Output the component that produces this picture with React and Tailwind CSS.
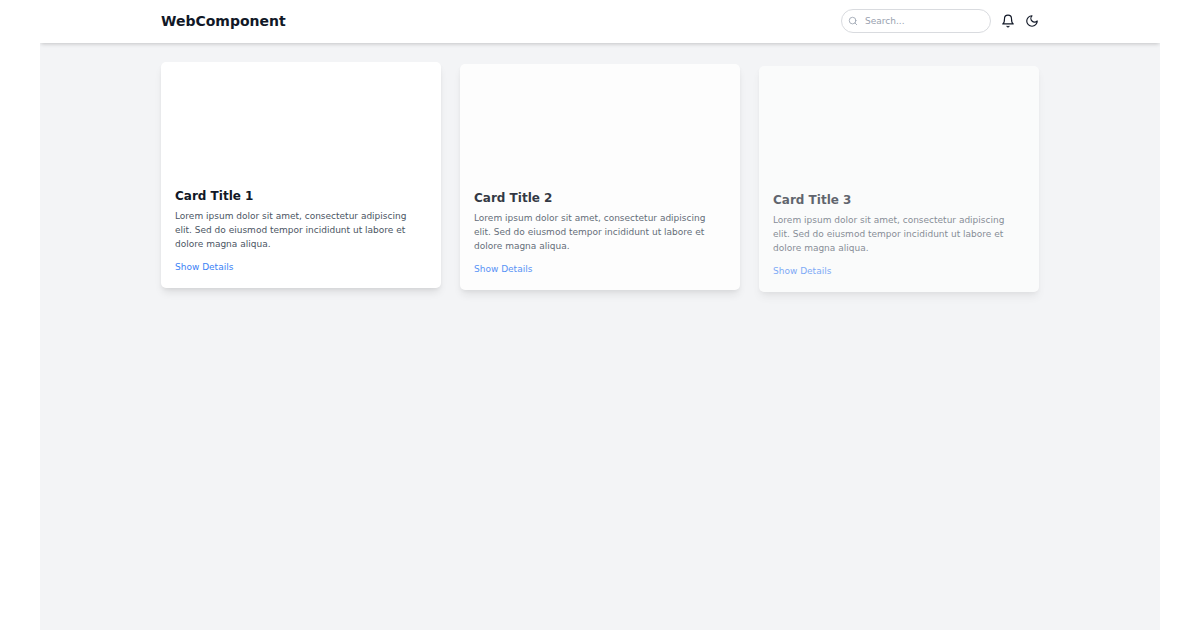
import React from 'react';

const cards = [
  { id: 1, title: 'Card Title 1', state: 'opacity-100' },
  { id: 2, title: 'Card Title 2', state: 'mt-[2px] opacity-85' },
  { id: 3, title: 'Card Title 3', state: 'mt-1 opacity-65' },
];

const SearchIcon = () => (
  <svg className="w-[10px] h-[10px] text-gray-400" fill="none" viewBox="0 0 24 24" stroke="currentColor" strokeWidth={2} strokeLinecap="round" strokeLinejoin="round">
    <circle cx="11" cy="11" r="8" />
    <path d="m21 21-4.3-4.3" />
  </svg>
);

const BellIcon = () => (
  <svg className="w-[14px] h-[14px]" fill="none" viewBox="0 0 24 24" stroke="currentColor" strokeWidth={2} strokeLinecap="round" strokeLinejoin="round">
    <path d="M6 8a6 6 0 0 1 12 0c0 7 3 9 3 9H3s3-2 3-9" />
    <path d="M10.3 21a1.94 1.94 0 0 0 3.4 0" />
  </svg>
);

const MoonIcon = () => (
  <svg className="w-[14px] h-[14px]" fill="none" viewBox="0 0 24 24" stroke="currentColor" strokeWidth={2} strokeLinecap="round" strokeLinejoin="round">
    <path d="M12 3a6 6 0 0 0 9 9 9 9 0 1 1-9-9Z" />
  </svg>
);

const Header = () => (
  <header className="relative z-10 bg-white shadow-[0_2px_4px_-1px_rgba(0,0,0,0.2)]">
    <div className="max-w-[896px] mx-auto px-[9px] pt-[9px] pb-[10px] flex items-center justify-between">
      <h1 className="text-[14px] leading-[20px] font-bold">WebComponent</h1>

      <div className="flex items-center gap-[10px]">
        <label className="flex items-center gap-[7px] w-[150px] h-6 pl-[6px] pr-[9px] border border-[#d9dbdf] rounded-full">
          <SearchIcon />
          <input
            type="text"
            aria-label="Search"
            placeholder="Search..."
            className="min-w-0 flex-1 bg-transparent text-[9px] leading-[14px] placeholder:text-gray-400 outline-none"
          />
        </label>
        <button type="button" aria-label="Notifications">
          <BellIcon />
        </button>
        <button type="button" aria-label="Toggle dark mode">
          <MoonIcon />
        </button>
      </div>
    </div>
  </header>
);

const Card = ({ title, state }) => (
  <article className={`bg-white rounded-[5px] shadow-[0_6px_9px_-2px_rgba(0,0,0,0.1),0_2px_4px_-1px_rgba(0,0,0,0.06)] ${state}`}>
    {/* Cover */}
    <div className="h-[112px]"></div>
    <div className="p-[14px]">
      <h2 className="text-[12px] leading-[16px] font-bold mb-[5px]">{title}</h2>
      <p className="max-w-[244px] text-[9px] leading-[14px] text-[#4b5563]">
        Lorem ipsum dolor sit amet, consectetur adipiscing elit. Sed do eiusmod tempor incididunt ut labore et dolore magna aliqua.
      </p>
      <button type="button" className="block mt-[9px] text-[9px] leading-[14px] text-[#3b82f6]">
        Show Details
      </button>
    </div>
  </article>
);

const App = () => (
  <div className="min-h-screen bg-white px-10 font-['DejaVu_Sans',sans-serif] text-[#111827]">
    <div className="min-h-screen overflow-hidden bg-gray-100">
      <Header />
      <main className="max-w-[896px] mx-auto px-[9px] py-[19px]">
        <div className="grid grid-cols-3 items-start gap-[19px]">
          {cards.map((card) => (
            <Card key={card.id} title={card.title} state={card.state} />
          ))}
        </div>
      </main>
    </div>
  </div>
);

export default App;
